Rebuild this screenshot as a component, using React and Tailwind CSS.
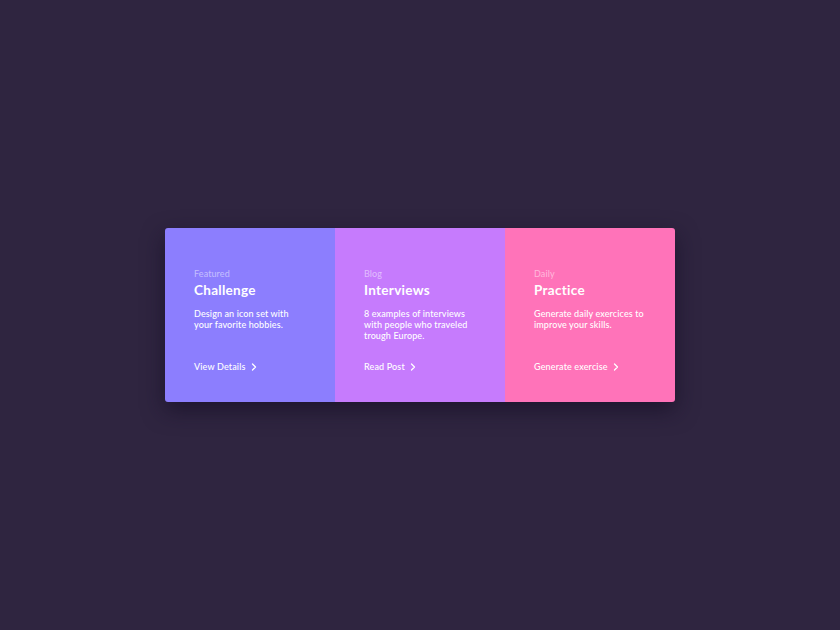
const cards = [
  {
    tag: "Featured",
    title: "Challenge",
    text: ["Design an icon set with", "your favorite hobbies."],
    link: "View Details",
    bg: "bg-[#8c7efe]",
  },
  {
    tag: "Blog",
    title: "Interviews",
    text: ["8 examples of interviews", "with people who traveled", "trough Europe."],
    link: "Read Post",
    bg: "bg-[#c67bfd]",
  },
  {
    tag: "Daily",
    title: "Practice",
    text: ["Generate daily exercices to", "improve your skills."],
    link: "Generate exercise",
    bg: "bg-[#ff73b9]",
  },
];

function Chevron() {
  return (
    <svg width="6" height="8" viewBox="0 0 6 8" fill="none" className="ml-[5px]">
      <path d="M1.5 1L4.5 4L1.5 7" stroke="white" strokeWidth="1.3" strokeLinecap="round" strokeLinejoin="round" />
    </svg>
  );
}

export default function App() {
  return (
    <div
      className="w-full h-[630px] bg-[#2f2540] flex items-center justify-center"
      style={{ fontFamily: "Lato, 'Noto Sans', sans-serif" }}
    >
      <div className="flex w-[510px] h-[174px] rounded-[3px] overflow-hidden shadow-[0_8px_22px_rgba(20,12,35,0.65)]">
        {cards.map((c) => (
          <div key={c.title} className={`${c.bg} w-[170px] h-full pl-[29px] pr-[10px] pt-[40px] text-white`}>
            <div className="text-[9px] leading-[11px] text-white/50 tracking-[0.1px]">{c.tag}</div>
            <div className="text-[13.5px] leading-[16px] font-bold mt-[3px] tracking-[0.3px]">{c.title}</div>
            <div className="text-[9px] leading-[11px] mt-[10px] h-[33px] font-medium tracking-[0.12px]">
              {c.text.map((t) => (
                <div key={t}>{t}</div>
              ))}
            </div>
            <div className="flex items-center text-[9px] leading-[11px] font-medium mt-[20px] tracking-[0.15px]">
              {c.link}
              <Chevron />
            </div>
          </div>
        ))}
      </div>
    </div>
  );
}
